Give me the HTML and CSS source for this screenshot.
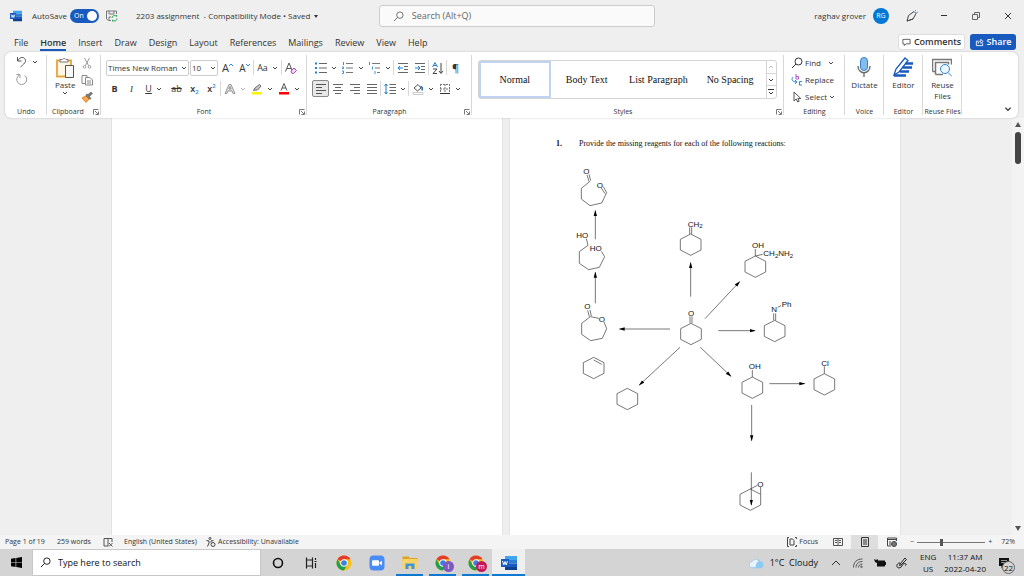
FILE: index.html
```html
<!DOCTYPE html>
<html lang="en">
<head>
  <meta charset="UTF-8" />
  <meta name="viewport" content="width=device-width, initial-scale=1.0" />
  <title>2203 assignment - Word</title>
  <link rel="stylesheet" href="styles.css">
</head>
<body>
  <!-- Shared icons -->
  <svg class="defs" aria-hidden="true">
    <symbol id="chev" viewBox="0 0 6 6"><path d="M1 2l2 2 2-2" fill="none" stroke="#444" /></symbol>
    <symbol id="launch" viewBox="0 0 6 6"><path d="M.5 5.500v-5h5M2 2l3 3M5.500 2.500v3h-3" fill="none" stroke="#555" stroke-width=".8" /></symbol>
    <symbol id="search" viewBox="0 0 12 12"><circle cx="7.500" cy="4.500" r="3.500" fill="none" stroke="currentColor" /><path d="M5 7L1 11" stroke="currentColor" /></symbol>
    <symbol id="word" viewBox="0 0 16 16">
      <path d="M4 1h12v4H4z" fill="#41a5ee" /><path d="M4 5h12v3.500H4z" fill="#2b7cd3" /><path d="M4 8.500h12V12H4z" fill="#185abd" /><path d="M4 12h12v3H4z" fill="#103f91" />
      <path d="M0 4h8v8H0z" fill="#185abd" /><path d="M1.500 6l1.300 4L4 6.500 5.200 10l1.300-4" fill="none" stroke="#fff" />
    </symbol>
    <symbol id="chrome" viewBox="0 0 16 16">
      <circle cx="8" cy="8" r="7.500" fill="#fbc116" />
      <path d="M8 8L1.500 4.250A7.500 7.500 0 0 1 14.500 4.250H8z" fill="#e33b2e" />
      <path d="M8 8L4.750 9.900 1.500 4.250A7.500 7.500 0 0 0 7.900 15.500L11.200 9.900z" fill="#229e4d" />
      <circle cx="8" cy="8" r="3.700" fill="#fff" /><circle cx="8" cy="8" r="2.800" fill="#3b7de9" />
    </symbol>
  </svg>

  <header class="titlebar">
    <div class="title-left">
      <svg class="app-icon" viewBox="0 0 16 16"><use href="#word" /></svg>
      <span class="autosave">AutoSave</span>
      <button class="toggle" aria-label="AutoSave on">On<span class="knob"></span></button>
      <svg class="save-icon" viewBox="0 0 12 12" fill="none" stroke="#777"><path d="M5 10.500H2.500l-2-1.500V1h10v3M3 1v3h5V1M3 10V7h2" /><path d="M6 8a2.500 2.500 0 0 1 4.500-1.500V5M11 8.500a2.500 2.500 0 0 1-4.500 1.500v1.500" stroke="#2fa35a" /></svg>
      <button class="doc-name">2203 assignment&nbsp; - Compatibility Mode • Saved <span class="caret"></span></button>
    </div>
    <div class="search-box">
      <svg viewBox="0 0 12 12"><use href="#search" /></svg>
      <input type="text" placeholder="Search (Alt+Q)" aria-label="Search">
    </div>
    <div class="title-right">
      <span>raghav grover</span>
      <span class="avatar">RG</span>
      <button class="win-btn pen" aria-label="Draw"><svg viewBox="0 0 12 12" fill="none" stroke="#444"><path d="M1 11l1.500-5.500L8 1.500l2 2-3 5.500zM1 11l6-2" /><path d="M9 1l1-1M10.500 2.500L12 2" stroke="#3b9be0" /></svg></button>
      <button class="win-btn" aria-label="Minimize"><svg viewBox="0 0 12 12" stroke="#333"><path d="M3 5.500h6" /></svg></button>
      <button class="win-btn" aria-label="Restore"><svg viewBox="0 0 12 12" fill="none" stroke="#666"><path d="M2.500 4.500h5v5h-5zM4.500 4V2.500h5v5H8" /></svg></button>
      <button class="win-btn" aria-label="Close"><svg viewBox="0 0 12 12" stroke="#333"><path d="M3 3l6 6M9 3l-6 6" /></svg></button>
    </div>
  </header>

  <nav class="tabs">
    <a href="#">File</a>
    <a href="#" class="active">Home</a>
    <a href="#">Insert</a>
    <a href="#">Draw</a>
    <a href="#">Design</a>
    <a href="#">Layout</a>
    <a href="#">References</a>
    <a href="#">Mailings</a>
    <a href="#">Review</a>
    <a href="#">View</a>
    <a href="#">Help</a>
    <button class="comments-btn"><svg viewBox="0 0 10 10" fill="none" stroke="#555"><path d="M1 1.500h8v5H4.500l-2 2v-2H1z" /></svg>Comments</button>
    <button class="share-btn"><svg viewBox="0 0 10 10" fill="none" stroke="#fff"><path d="M4 3.500H1.500v5h7V6M3.500 6.500c0-2 1-3 3-3V1.500L9 4 6.500 6V4.500" /></svg>Share</button>
  </nav>

  <div class="ribbon">
    <!-- Undo -->
    <section class="group undo">
      <div class="body">
        <div class="undo-row">
          <button aria-label="Undo"><svg class="i12" viewBox="0 0 12 12" fill="none" stroke="#555"><path d="M1.500 1v4h4M1.500 5c2-3.500 5-4.500 7-2.500s1.500 4-4 8.500" /></svg></button>
          <svg class="chev"><use href="#chev" /></svg>
        </div>
        <button aria-label="Redo"><svg class="i12" viewBox="0 0 12 12" fill="none" stroke="#999"><path d="M.5 1.500H4V5M3.500 2a5 5 0 1 0 5 .3" /></svg></button>
      </div>
      <h2>Undo</h2>
    </section>

    <!-- Clipboard -->
    <section class="group clipboard">
      <div class="body">
        <button class="big">
          <svg class="paste-icon" viewBox="0 0 20 22"><path d="M2 3.500h14v16H2z" fill="#fff6e6" stroke="#e8a33d" stroke-width="1.800" /><path d="M5 5V2.500h2.500a2 2 0 0 1 3.500 0h2V5z" fill="#fff" stroke="#777" /><path d="M10.500 8.500h8v12h-8z" fill="#f7f7f7" stroke="#555" /></svg>
          Paste
          <svg class="chev"><use href="#chev" /></svg>
        </button>
        <div class="clip-side">
          <button aria-label="Cut"><svg class="i12" viewBox="0 0 12 12" fill="none" stroke="#999"><path d="M3.500 1l4 7.500M8.500 1l-4 7.500" /><circle cx="3.500" cy="9.800" r="1.300" /><circle cx="8.500" cy="9.800" r="1.300" /></svg></button>
          <button aria-label="Copy"><svg class="i12" viewBox="0 0 12 12" fill="#fff" stroke="#888"><path d="M4 9.500H1v-8h5v2M4.500 3.500H9l2.500 2.500v5h-7zM6 7h4M6 9h4" /></svg></button>
          <button aria-label="Format Painter"><svg class="i12" viewBox="0 0 12 12"><path d="M1 7l4-2 3 3-3 3.500z" fill="#f3b04a" stroke="#d9822b" /><path d="M5 4.500l4 4 1-1-1.500-2 3-3-1.500-1.500-3 2.500-1.500-.5z" fill="#777" stroke="#555" stroke-width=".5" /></svg></button>
        </div>
      </div>
      <h2>Clipboard</h2>
      <button class="launcher" aria-label="Clipboard options"><svg><use href="#launch" /></svg></button>
    </section>

    <!-- Font -->
    <section class="group font">
      <div class="body">
        <div class="row">
          <span class="combo name"><select aria-label="Font"><option>Times New Roman</option></select><svg class="chev"><use href="#chev" /></svg></span>
          <span class="combo size"><select aria-label="Font size"><option>10</option></select><svg class="chev"><use href="#chev" /></svg></span>
          <button class="tool letter">A<svg class="mark" viewBox="0 0 4 4"><path d="M0 3l2-2 2 2" fill="none" stroke="#2b88d8" /></svg></button>
          <button class="tool letter small">A<svg class="mark" viewBox="0 0 4 4"><path d="M0 1l2 2 2-2" fill="none" stroke="#2b88d8" /></svg></button>
          <i class="sep"></i>
          <button class="tool drop">Aa<svg class="chev"><use href="#chev" /></svg></button>
          <i class="sep"></i>
          <button class="tool" aria-label="Clear formatting"><svg class="i12" viewBox="0 0 12 12" fill="none" stroke="#555"><path d="M.5 9.500L4 1l3 7M2 6.500h4" /><path d="M6 9l3-3 2.500 2.500-3 3H7z" stroke="#a846b8" fill="#f0d8f4" /></svg></button>
        </div>
        <div class="row">
          <button class="tool bold">B</button>
          <button class="tool italic">I</button>
          <button class="tool drop underline"><u>U</u><svg class="chev"><use href="#chev" /></svg></button>
          <button class="tool strike"><s>ab</s></button>
          <button class="tool script">x<sub>2</sub></button>
          <button class="tool script">x<sup>2</sup></button>
          <i class="sep"></i>
          <button class="tool drop faded" aria-label="Text effects"><svg class="i12" viewBox="0 0 12 12"><path d="M1 10.500L5 1.500h2l4 9H9L8 8H4l-1 2.500zM5 6h2L6 3.500z" fill="#ddd" stroke="#999" /></svg><svg class="chev"><use href="#chev" /></svg></button>
          <button class="tool drop" aria-label="Highlight"><svg class="i12" viewBox="0 0 12 12"><path d="M2.500 7.500L4 5l4.500-3.500L10 3 6.500 7H4z" fill="#ccc" stroke="#666" /><path d="M1 9h10v2.500H1z" fill="#fff200" /></svg><svg class="chev"><use href="#chev" /></svg></button>
          <button class="tool drop" aria-label="Font color"><svg class="i12" viewBox="0 0 12 12"><path d="M3 7.500L6 .5l3 7M4 5h4" fill="none" stroke="#555" /><path d="M1 9h10v2.500H1z" fill="#f00" /></svg><svg class="chev"><use href="#chev" /></svg></button>
        </div>
      </div>
      <h2>Font</h2>
      <button class="launcher" aria-label="Font options"><svg><use href="#launch" /></svg></button>
    </section>

    <!-- Paragraph -->
    <section class="group paragraph">
      <div class="body">
        <div class="row">
          <button class="tool drop wide" aria-label="Bullets"><svg class="i12" viewBox="0 0 12 12"><path d="M4 1.500h8M4 6h8M4 10.500h8" stroke="#666" /><path d="M0 .5h2v2H0zM0 5h2v2H0zM0 9.500h2v2H0z" fill="#1e7fd0" /></svg><svg class="chev"><use href="#chev" /></svg></button>
          <button class="tool drop wide" aria-label="Numbering"><svg class="i12" viewBox="0 0 12 12" fill="none"><path d="M4 1.500h7M4 6h7M4 10.500h7" stroke="#777" /><path d="M1.500 0v3M0 5h1.500v1.500H0M0 9h1.500v2.500H0" stroke="#3b93d8" /></svg><svg class="chev"><use href="#chev" /></svg></button>
          <button class="tool drop wide" aria-label="Multilevel list"><svg class="i12" viewBox="0 0 12 12" fill="none"><path d="M3 1.500h8M6 6h5M8 10.500h3" stroke="#777" /><path d="M.5 0v3M3.500 4.500v3M6 9v3" stroke="#3b93d8" /></svg><svg class="chev"><use href="#chev" /></svg></button>
          <i class="sep"></i>
          <button class="tool" aria-label="Decrease indent"><svg class="i12" viewBox="0 0 12 12" fill="none" stroke="#666"><path d="M1 1.500h10M7 4.500h4M7 7.500h4M1 10.500h10" /><path d="M6 6H1.500M3 4L1 6l2 2" stroke="#1e7fd0" /></svg></button>
          <button class="tool" aria-label="Increase indent"><svg class="i12" viewBox="0 0 12 12" fill="none" stroke="#666"><path d="M1 1.500h10M7 4.500h4M7 7.500h4M1 10.500h10" /><path d="M1 6h4.500M4 4l2 2-2 2" stroke="#1e7fd0" /></svg></button>
          <i class="sep"></i>
          <button class="tool" aria-label="Sort"><svg class="i12" viewBox="0 0 12 12" fill="none"><path d="M.5 5L3 .5 5.500 5M1.500 3.500h3" stroke="#1e7fd0" /><path d="M1 7h4l-4 4.500h4M9 1v10M7 9l2 2.500L11 9" stroke="#444" /></svg></button>
          <i class="sep"></i>
          <button class="tool pilcrow">¶</button>
        </div>
        <div class="row">
          <button class="tool pressed" aria-label="Align left"><svg class="i12" viewBox="0 0 12 12" stroke="#555"><path d="M1 1.500h10M1 4.500h6M1 7.500h10M1 10.500h6" /></svg></button>
          <button class="tool" aria-label="Center"><svg class="i12" viewBox="0 0 12 12" stroke="#666"><path d="M1 1.500h10M3 4.500h6M1 7.500h10M3 10.500h6" /></svg></button>
          <button class="tool" aria-label="Align right"><svg class="i12" viewBox="0 0 12 12" stroke="#666"><path d="M1 1.500h10M5 4.500h6M1 7.500h10M5 10.500h6" /></svg></button>
          <button class="tool" aria-label="Justify"><svg class="i12" viewBox="0 0 12 12" stroke="#666"><path d="M1 1.500h10M1 4.500h10M1 7.500h10M1 10.500h10" /></svg></button>
          <i class="sep"></i>
          <button class="tool drop wide" aria-label="Line spacing"><svg class="i12" viewBox="0 0 12 12" fill="none" stroke="#666"><path d="M5.500 1.500H12M5.500 4.500H12M5.500 7.500H12M5.500 10.500H12" /><path d="M2 1v10M.5 3L2 1l1.500 2M.5 9L2 11l1.500-2" stroke="#1e7fd0" /></svg><svg class="chev"><use href="#chev" /></svg></button>
          <i class="sep"></i>
          <button class="tool drop wide" aria-label="Shading"><svg class="i12" viewBox="0 0 12 12" fill="none"><path d="M2 5l4-3.500L9 5 5.500 8z" stroke="#555" /><path d="M8.500 3.500c2 0 2 1.500 1.500 4" stroke="#1e6fc0" stroke-width="1.500" /><path d="M1 9.500h10v2H1z" stroke="#ccc" /></svg><svg class="chev"><use href="#chev" /></svg></button>
          <button class="tool drop wide" aria-label="Borders"><svg class="i12" viewBox="0 0 12 12" fill="none" stroke="#777"><path d="M1.500 1v9M6 1v9M10.500 1v9M1 1.500h10M1 6h10" stroke-dasharray="2 1" /><path d="M1 10.500h10" stroke="#333" /></svg><svg class="chev"><use href="#chev" /></svg></button>
        </div>
      </div>
      <h2>Paragraph</h2>
      <button class="launcher" aria-label="Paragraph options"><svg><use href="#launch" /></svg></button>
    </section>

    <!-- Styles -->
    <section class="group styles">
      <div class="body">
        <div class="gallery">
          <button class="style selected">Normal</button>
          <button class="style">Body Text</button>
          <button class="style">List Paragraph</button>
          <button class="style">No Spacing</button>
          <div class="scroll">
            <button aria-label="Previous" disabled><svg viewBox="0 0 6 6"><path d="M1 4l2-2 2 2" fill="none" stroke="#bbb" /></svg></button>
            <button aria-label="Next"><svg viewBox="0 0 6 6"><use href="#chev" /></svg></button>
            <button aria-label="More styles"><svg viewBox="0 0 6 6"><path d="M0 .5h6M1 3l2 2 2-2" fill="none" stroke="#333" /></svg></button>
          </div>
        </div>
      </div>
      <h2>Styles</h2>
      <button class="launcher" aria-label="Styles options"><svg><use href="#launch" /></svg></button>
    </section>

    <!-- Editing -->
    <section class="group editing">
      <div class="body">
        <button><svg class="i12" viewBox="0 0 12 12"><use href="#search" /></svg><span class="find">Find</span><svg class="chev"><use href="#chev" /></svg></button>
        <button><svg class="i12" viewBox="0 0 12 12" fill="none"><path d="M5 0v5M5 2.500h2.500V5H5" stroke="#b455c4" /><path d="M11 7.500H8.500V11H11M2 3C0 5 1 8 5.500 8M4 6l2 2-2 2" stroke="#2b88d8" /></svg>Replace</button>
        <button><svg class="i12" viewBox="0 0 12 12" fill="none" stroke="#555"><path d="M3 1v9l2.200-2 1.500 3 1.500-.8L6.800 7.500h3z" /></svg>Select<svg class="chev"><use href="#chev" /></svg></button>
      </div>
      <h2>Editing</h2>
    </section>

    <section class="group voice">
      <div class="body">
        <button class="big"><svg class="i20" viewBox="0 0 20 20"><rect x="6.500" y=".5" width="7" height="13" rx="3.500" fill="#83bdf0" stroke="#3a7fc1" /><path d="M4 9c0 9 12 9 12 0M10 16v4" fill="none" stroke="#666" stroke-width="1.300" /></svg>Dictate</button>
      </div>
      <h2>Voice</h2>
    </section>

    <section class="group editor">
      <div class="body">
        <button class="big"><svg class="i20" viewBox="0 0 20 20"><path d="M1 18L3 12 12 1l3 2.500L6 15z" fill="#fff" stroke="#185abd" stroke-width="1.300" /><path d="M12.500 6.500H20M9.500 10.500H19M7 14.500h9M1 18.500h12" stroke="#185abd" stroke-width="2.600" /></svg>Editor</button>
      </div>
      <h2>Editor</h2>
    </section>

    <section class="group reuse">
      <div class="body">
        <button class="big"><svg class="i20" viewBox="0 0 20 20" fill="none" stroke="#777"><path d="M.5 14.500V2.500h19v5M.5 14.500H3M3.500 17.500v-12h13v2M3.500 17.500H11" stroke-width="1.500" /><circle cx="13" cy="12" r="4.500" stroke="#2b88d8" fill="#eef6fd" /><path d="M16 15.500l4 4" stroke="#2b88d8" /></svg>Reuse<br>Files</button>
      </div>
      <h2>Reuse Files</h2>
    </section>

    <button class="collapse" aria-label="Collapse ribbon"><svg class="chev" viewBox="0 0 6 6"><use href="#chev" /></svg></button>
  </div>

  <main class="workspace">
    <div class="pages">
      <article class="page"></article>
      <article class="page">
        <p class="question"><span>1.</span>Provide the missing reagents for each of the following reactions:</p>
        <svg class="scheme" viewBox="-90 90 1170 1125">
          <defs>
            <path id="hex" d="M0-32L31-16V16L0 32-31 16V-16z" />
            <marker id="head" viewBox="0 0 18 12" refX="16" refY="6" markerWidth="18" markerHeight="12" markerUnits="userSpaceOnUse" orient="auto"><path d="M0 1l18 5-18 5z" class="solid" /></marker>
          </defs>

          <!-- Left column -->
          <path d="M141 135l6 19M147 133l5 19M150 154L124 175V207L150 227 185 219 200 188 190 170M195 191L184 174" />
          <text x="130" y="133">O</text>
          <text x="170" y="173">O</text>
          <path d="M139 326L144 346 118 365V400L146 419 178 412 194 380 184 364" />
          <text x="109" y="325">HO</text>
          <text x="149" y="364">HO</text>
          <path d="M143 541l5 19M150 540l4 18M177 565L151 560 125 580V613L152 632 187 625 200 596 192 576" />
          <text x="133" y="538">O</text>
          <text x="176" y="577">O</text>
          <use href="#hex" x="161" y="714" />
          <path d="M161 690l24 13" />
          <use href="#hex" x="262" y="807" />

          <!-- Starting ketone -->
          <use href="#hex" x="453" y="612" />
          <path d="M450 559v20M456 559v20" />
          <text x="444" y="557">O</text>

          <!-- Products -->
          <use href="#hex" x="452" y="344" />
          <path d="M449 292v20M455 292v20" />
          <text x="443" y="290">CH<tspan class="sub" dy="5">2</tspan></text>

          <use href="#hex" x="646" y="410" />
          <path d="M646 357v21l22-5" />
          <text x="636" y="355">OH</text>
          <text x="670" y="378">CH<tspan class="sub" dy="5">2</tspan><tspan dy="-5">NH</tspan><tspan class="sub" dy="5">2</tspan></text>

          <use href="#hex" x="704" y="603" />
          <path d="M701 550v21M707 550v21M713 532l10-5" />
          <text x="694" y="547">N</text>
          <text x="725" y="532">Ph</text>

          <use href="#hex" x="637" y="773" />
          <path d="M637 720v21" />
          <text x="626" y="718">OH</text>

          <use href="#hex" x="853" y="763" />
          <path d="M853 709v22" />
          <text x="844" y="707">Cl</text>

          <use href="#hex" x="631" y="1109" />
          <path d="M631 1077l21-11M662 1093v-22" />
          <text x="652" y="1071">O</text>

          <!-- Arrows -->
          <g class="arrows">
            <path d="M166 328V242" />
            <path d="M166 520V427" />
            <path d="M452 500V398" />
            <path d="M495 566L599 455" />
            <path d="M390 597H238" />
            <path d="M535 602H645" />
            <path d="M420 652L298 765" />
            <path d="M481 652L573 739" />
            <path d="M688 761H794" />
            <path d="M635 825V932" />
            <path d="M634 1027V1125" />
          </g>
        </svg>
      </article>
    </div>
    <div class="scrollbar">
      <i class="up"></i>
      <i class="thumb"></i>
      <i class="down"></i>
    </div>
  </main>

  <div class="statusbar">
    <span class="s-page">Page 1 of 19</span>
    <span class="s-words">259 words</span>
    <svg class="s-proof" viewBox="0 0 10 10" fill="none" stroke="#555"><path d="M5 1.500V9M5 1.500H1V9h4M5 1.500h4V5M6 6l3.500 3.500M9.500 6L6 9.500" /></svg>
    <span class="s-lang">English (United States)</span>
    <span class="s-acc"><svg viewBox="0 0 10 10" fill="none" stroke="#444"><circle cx="4" cy="1.500" r="1" /><path d="M.5 3.500L3 4v2L1.500 9.500M7.500 3.500L5 4v1.500" /><circle cx="7" cy="7.500" r="2" /></svg>Accessibility: Unavailable</span>
    <button class="s-focus"><svg viewBox="0 0 10 10" fill="none" stroke="#444"><path d="M2 .5H.5V9.500H2M8 .5h1.500V2M8 9.500h1.500V8M3 2h2.500L7 3.500V8H3z" /></svg>Focus</button>
    <button class="view" aria-label="Read mode"><svg viewBox="0 0 10 10" fill="none" stroke="#555"><path d="M.5 1.500h9v7h-9zM5 1v8M2 3.500h2M2 5.500h2M6 3.500h2M6 5.500h2" /></svg></button>
    <button class="view on" aria-label="Print layout"><svg viewBox="0 0 10 10" fill="none" stroke="#333"><path d="M1.500.5h7v9h-7zM3 3h4M3 5h4M3 7h4" /></svg></button>
    <button class="view" aria-label="Web layout"><svg viewBox="0 0 10 10" fill="none" stroke="#444"><path d="M9.500 4V1H.5v8H4M1 2.500h8M2 5h2M2 7h2" /><circle cx="7" cy="7" r="2.500" fill="#777" /></svg></button>
    <div class="zoom">
      <span>−</span>
      <input type="range" min="10" max="190" value="72" aria-label="Zoom">
      <span>+</span>
    </div>
    <span class="s-pct">72%</span>
  </div>

  <footer class="taskbar">
    <button class="start" aria-label="Start"><svg viewBox="0 0 12 12"><path d="M0 2l5-.8v4.500H0zM5.700 1L12 0v5.700H5.700zM0 6.400h5V11l-5-.8zM5.700 6.400H12V12l-6.300-1z" /></svg></button>
    <div class="task-search">
      <svg viewBox="0 0 12 12"><use href="#search" /></svg>
      <input type="text" placeholder="Type here to search" aria-label="Type here to search">
    </div>
    <div class="apps">
      <button aria-label="Cortana"><svg viewBox="0 0 16 16"><circle cx="8" cy="8" r="4.500" fill="none" stroke="#111" stroke-width="1.600" /></svg></button>
      <button aria-label="Task view"><svg viewBox="0 0 16 16" fill="none" stroke="#222"><path d="M3.500 2.500v11M9.500 2.500v11M3.500 5h6M3.500 11h6M12.500 3v2M12.500 8v5M11.500 6.500h2" stroke-width="1.200" /></svg></button>
      <button aria-label="Chrome"><svg viewBox="0 0 16 16"><use href="#chrome" /></svg></button>
      <button aria-label="Zoom"><svg viewBox="0 0 16 16"><rect x=".5" y=".5" width="15" height="15" rx="4" fill="#4a8cf7" /><rect x="3" y="5.300" width="7" height="5.500" rx="1" fill="#fff" /><path d="M10.500 7.500L13 5.800v4.500l-2.500-1.500z" fill="#fff" /></svg></button>
      <button class="open" aria-label="File Explorer"><svg viewBox="0 0 16 16"><path d="M.5 1.500h6l1 1.500h8v3H.5z" fill="#d9a321" /><path d="M.5 4h15v10H.5z" fill="#fbd264" /><path d="M3.500 14V8.500h9V14h-3v-3h-3v3z" fill="#3d95dd" /></svg></button>
      <button class="open" aria-label="Chrome, profile i"><svg viewBox="0 0 16 16"><use href="#chrome" /></svg><b class="badge violet">i</b></button>
      <button class="open" aria-label="Chrome, profile m"><svg viewBox="0 0 16 16"><use href="#chrome" /></svg><b class="badge pink">m</b></button>
      <button class="open current" aria-label="Word"><svg viewBox="0 0 16 16"><use href="#word" /></svg></button>
    </div>
    <div class="tray">
      <svg class="weather" viewBox="0 0 16 12"><path d="M4 11.500a3.500 3.500 0 0 1-.5-7A5 5 0 0 1 12 4a3.800 3.800 0 0 1 .5 7.500z" fill="#8fc8f2" /><path d="M3.500 10.500a2.500 2.500 0 0 1 0-5.500C5 2 9 1.500 10.500 4.500c-2 .5-3 2-3.500 6z" fill="#e6f4fd" /></svg>
      <span class="temp">1°C&nbsp; Cloudy</span>
      <svg class="tray-icon" viewBox="0 0 12 12" fill="none" stroke="#333"><path d="M2 8l4-4 4 4" /></svg>
      <svg class="tray-icon" viewBox="0 0 12 12" fill="none" stroke="#555"><path d="M1.500 10.500C1.500 5 5 2 10.500 2M4 10.500c0-3.500 2.500-6 6.500-6M6.500 10.500c0-2 1.500-3.500 4-3.500" /><circle cx="9.500" cy="9.800" r=".8" /></svg>
      <svg class="tray-icon" viewBox="0 0 12 12"><path d="M0 2l2 1 1.500-1L4 3.500h7V5h1v3h-1v1.500H3V6L1 5z" fill="#111" /></svg>
      <svg class="tray-icon" viewBox="0 0 12 12" fill="none" stroke="#222"><path d="M4 7l5-6 1.500 1.500L5 8 3.500 8.500zM4 6c-4 0-4 5-1 5s3-4 5-4.500 3 1.500 1 2" /></svg>
      <span class="stack lang">ENG<br>US</span>
      <span class="stack time">11:37 AM<br>2022-04-20</span>
      <button class="notify" aria-label="Notifications"><svg viewBox="0 0 12 12"><path d="M1 1h10v8H6l-2.500 2.500V9H1z" fill="#111" /><path d="M3 3.500h6M3 5.500h6" stroke="#ccc" stroke-width=".7" /></svg><b>22</b></button>
    </div>
  </footer>
</body>
</html>
```
FILE: styles.css
```css
* {
  box-sizing: border-box;
  margin: 0;
  padding: 0;
}

body {
  display: flex;
  flex-direction: column;
  min-height: 100vh;
  background-color: #efefef;
  color: #333;
  font-family: "Open Sans", "Noto Sans", sans-serif;
  font-size: 8px;
  line-height: 12px;
}

button,
input,
select {
  font: inherit;
  color: inherit;
  background: none;
  border: none;
}

svg {
  display: block;
  flex: none;
}

.defs {
  position: absolute;
  width: 0;
  height: 0;
}

.i12 {
  width: 12px;
  height: 12px;
}

.i20 {
  width: 20px;
  height: 20px;
}

.chev {
  width: 6px;
  height: 6px;
}

/* Title bar */
.titlebar {
  display: flex;
  align-items: center;
  height: 32px;
}

.title-left {
  display: flex;
  align-items: center;
  flex: 1;
  padding-left: 10px;
}

.app-icon {
  width: 12px;
  height: 12px;
  margin-right: 10px;
}

.autosave {
  width: 38px;
}

.toggle {
  display: flex;
  align-items: center;
  justify-content: space-between;
  width: 29px;
  height: 14px;
  padding: 0 2px 0 4px;
  border-radius: 7px;
  background: #185abd;
  color: #fff;
  font-size: 7px;
}

.knob {
  width: 10px;
  height: 10px;
  border-radius: 50%;
  background: #fff;
}

.save-icon {
  width: 12px;
  height: 12px;
  margin: 0 18px 0 7px;
}

.doc-name {
  display: flex;
  align-items: center;
  gap: 4px;
  white-space: nowrap;
}

.caret {
  border: 2px solid transparent;
  border-top: 3px solid #333;
  border-bottom: 0;
}

.search-box {
  display: flex;
  align-items: center;
  gap: 8px;
  width: 27%;
  height: 22px;
  padding-left: 13px;
  border: 1px solid #ccc;
  border-radius: 3px;
  background: #fafafa;
  color: #666;
  font-size: 9px;
}

.search-box svg {
  width: 11px;
  height: 11px;
}

.search-box input,
.task-search input {
  flex: 1;
  min-width: 0;
  outline: none;
}

::placeholder {
  color: inherit;
  opacity: 1;
}

.title-right {
  display: flex;
  align-items: center;
  justify-content: flex-end;
  flex: 1;
}

.avatar {
  width: 16px;
  height: 16px;
  margin: 0 7px;
  border-radius: 50%;
  background: #0078d4;
  color: #fff;
  font-size: 7px;
  line-height: 16px;
  text-align: center;
}

.win-btn {
  display: flex;
  justify-content: center;
  width: 32px;
}

.win-btn svg {
  width: 12px;
  height: 12px;
}

/* Tabs */
.tabs {
  display: flex;
  align-items: center;
  gap: 12px;
  height: 20px;
  padding: 0 8px 0 14px;
  font-size: 9px;
}

.tabs a {
  height: 18px;
  line-height: 20px;
  color: #333;
  text-decoration: none;
}

.tabs .active {
  border-bottom: 2px solid #185abd;
  font-weight: 600;
}

.tabs button {
  display: flex;
  align-items: center;
  justify-content: center;
  gap: 3px;
  height: 16px;
  border-radius: 3px;
  font-weight: 600;
}

.tabs button svg {
  width: 9px;
  height: 9px;
}

.comments-btn {
  width: 67px;
  margin-left: auto;
  margin-right: -7px;
  border: 1px solid #ddd;
  background: #fff;
}

.tabs .share-btn {
  width: 46px;
  background: #185abd;
  color: #fff;
}

/* Ribbon */
.ribbon {
  display: flex;
  height: 66px;
  margin: 0 6px 0 5px;
  border-radius: 6px;
  background: #fff;
  box-shadow: 0 0 2px rgba(0, 0, 0, 0.25);
  z-index: 1;
}

.group {
  position: relative;
  display: flex;
  flex-direction: column;
  flex: none;
}

.group::after {
  content: "";
  position: absolute;
  top: 3px;
  right: 0;
  bottom: 3px;
  width: 1px;
  background: #d8d8d8;
}

.group h2 {
  height: 12px;
  font-size: 7px;
  font-weight: 400;
  line-height: 12px;
  text-align: center;
  white-space: nowrap;
}

.group .body {
  flex: 1;
}

.launcher {
  position: absolute;
  right: 2px;
  bottom: 3px;
}

.launcher svg {
  width: 6px;
  height: 6px;
}

.big {
  display: flex;
  flex-direction: column;
  align-items: center;
  line-height: 11px;
}

.undo {
  width: 42px;
}

.undo .body {
  padding: 4px 0 0 11px;
}

.undo-row {
  display: flex;
  align-items: center;
  gap: 4px;
  margin-bottom: 5px;
}

.clipboard {
  width: 54px;
}

.clipboard h2 {
  padding-right: 12px;
}

.clipboard .body {
  display: flex;
  gap: 6px;
  padding: 5px 0 0 8px;
}

.paste-icon {
  width: 20px;
  height: 22px;
}

.clip-side {
  display: flex;
  flex-direction: column;
  gap: 5px;
}

.font {
  width: 206px;
}

.font .body,
.paragraph .body {
  padding: 5px 0 0 5px;
}

.row {
  display: flex;
  align-items: center;
  height: 21px;
}

.combo {
  position: relative;
  height: 16px;
  margin-right: 1px;
  border: 1px solid #ccc;
  border-radius: 2px;
}

.combo select {
  width: 100%;
  height: 14px;
  padding-left: 1px;
  appearance: none;
}

.combo .chev {
  position: absolute;
  top: 4px;
  right: 1px;
}

.name {
  width: 83px;
}

.size {
  width: 28px;
}

.tool {
  position: relative;
  display: flex;
  align-items: center;
  justify-content: center;
  width: 17px;
  height: 17px;
  font-size: 9px;
}

.drop {
  width: 27px;
  gap: 4px;
}

.letter {
  font-size: 11px;
}

.letter.small {
  font-size: 10px;
}

.mark {
  width: 4px;
  height: 4px;
  margin-bottom: 6px;
}

.bold {
  font-weight: 700;
}

.italic {
  font-family: "Liberation Serif", serif;
  font-style: italic;
}

.strike {
  width: 19px;
}

.script {
  font-weight: 600;
}

.script sub,
.script sup {
  color: #2b88d8;
  font-size: 6px;
}

.script sub {
  margin-top: 6px;
}

.script sup {
  margin-bottom: 6px;
}

.faded .chev {
  opacity: 0.4;
}

.sep {
  width: 1px;
  height: 15px;
  background: #d8d8d8;
}

.paragraph {
  width: 165px;
}

.pressed {
  border: 1px solid #888;
  border-radius: 2px;
  background: #e8e8e8;
}

.pilcrow {
  font-size: 11px;
}

.styles {
  flex: 1;
}

.styles h2 {
  padding-right: 10px;
}

.styles .body {
  padding: 8px 7px 0 6px;
}

.gallery {
  display: flex;
  height: 39px;
  border: 1px solid #d4d4d4;
  border-radius: 3px;
}

.style {
  flex: 1 1 0;
  min-width: 0;
  color: #111;
  font-family: "Liberation Serif", serif;
  font-size: 10px;
  text-align: center;
  white-space: nowrap;
}

.style.selected {
  box-shadow: inset 0 0 0 2px #c0d3f1;
}

.scroll {
  display: flex;
  flex-direction: column;
  width: 10px;
  border-left: 1px solid #d4d4d4;
}

.scroll button {
  flex: 1;
  padding-left: 1px;
}

.scroll button + button {
  border-top: 1px solid #d4d4d4;
}

.scroll svg {
  width: 6px;
  height: 6px;
}

.editing {
  width: 61px;
}

.editing .body {
  padding: 2px 0 0 7px;
}

.editing .body button {
  display: flex;
  align-items: center;
  gap: 2px;
  height: 17px;
}

.find {
  width: 21px;
  text-align: left;
}

.voice,
.editor,
.reuse {
  width: 39px;
}

.voice .body,
.editor .body,
.reuse .body {
  display: flex;
  justify-content: center;
  align-items: flex-start;
  padding-top: 5px;
}

.voice .big svg,
.editor .big svg,
.reuse .big svg {
  margin-bottom: 2px;
}

.collapse {
  align-self: flex-end;
  width: 56px;
  padding: 0 6px 5px 0;
}

.collapse .chev {
  width: 8px;
  height: 8px;
  margin-left: auto;
}

/* Document area */
.workspace {
  display: flex;
  flex: 1;
}

.pages {
  display: flex;
  justify-content: center;
  gap: 8px;
  flex: 1;
}

.page {
  width: 39%;
  max-width: 390px;
  background: #fff;
  box-shadow: 0 0 1px #aaa;
}

.question {
  padding: 20px 0 10px 46px;
  color: #111;
  font-family: "Liberation Serif", serif;
  font-size: 8px;
}

.question span {
  display: inline-block;
  width: 23px;
  font-weight: 700;
}

.scheme {
  width: 100%;
  fill: none;
  stroke: #333;
  stroke-width: 2;
}

.scheme text {
  fill: #111;
  stroke: none;
  font-family: "Liberation Sans", sans-serif;
  font-size: 24px;
}

.scheme .sub {
  font-size: 18px;
}

.scheme .solid {
  fill: #000;
  stroke: none;
}

.arrows path {
  marker-end: url(#head);
}

.scrollbar {
  display: flex;
  flex-direction: column;
  align-items: center;
  width: 12px;
  padding: 4px 0;
  background: #f3f3f3;
}

.up,
.down {
  border: 3px solid transparent;
}

.up {
  border-top: 0;
  border-bottom: 5px solid #555;
}

.down {
  margin-top: auto;
  border-bottom: 0;
  border-top: 5px solid #555;
}

.thumb {
  width: 6px;
  height: 32px;
  margin-top: 5px;
  border-radius: 3px;
  background: #444;
}

/* Status bar */
.statusbar {
  display: flex;
  align-items: center;
  height: 14px;
  padding: 0 9px 0 5px;
  background: #f4f4f4;
  font-size: 7px;
  white-space: nowrap;
  z-index: 1;
}

.statusbar svg {
  width: 10px;
  height: 10px;
}

.s-page {
  width: 52px;
}

.s-words {
  width: 46px;
}

.s-lang {
  width: 82px;
  margin-left: 11px;
}

.s-acc,
.s-focus {
  display: flex;
  align-items: center;
  gap: 2px;
}

.s-focus {
  margin-left: auto;
  margin-right: 6px;
}

.view {
  display: flex;
  align-items: center;
  justify-content: center;
  width: 27px;
  height: 14px;
}

.view.on {
  background: #dedede;
}

.zoom {
  display: flex;
  align-items: center;
  gap: 3px;
  margin: 0 9px 0 5px;
}

.zoom input {
  width: 68px;
  height: 8px;
  appearance: none;
  background: linear-gradient(#777, #777) center / 100% 1px no-repeat;
}

.zoom input::-webkit-slider-thumb {
  appearance: none;
  width: 3px;
  height: 7px;
  background: #555;
}

/* Taskbar */
.taskbar {
  display: flex;
  height: 27px;
  background: #d4d4d4;
  color: #111;
  font-size: 8px;
}

.start {
  display: flex;
  align-items: center;
  justify-content: center;
  width: 32px;
}

.start svg {
  width: 11px;
  height: 11px;
}

.task-search {
  display: flex;
  align-items: center;
  gap: 7px;
  width: 229px;
  padding-left: 7px;
  border: 1px solid #c8c8c8;
  background: #fff;
  font-size: 9px;
}

.task-search svg {
  width: 11px;
  height: 11px;
}

.apps {
  display: flex;
}

.apps button {
  position: relative;
  display: flex;
  align-items: center;
  justify-content: center;
  width: 33px;
}

.apps svg {
  width: 16px;
  height: 16px;
}

.open::after {
  content: "";
  position: absolute;
  left: 3px;
  right: 3px;
  bottom: 0;
  height: 2px;
  background: #0f78d0;
}

.current {
  background: #efefef;
}

.current::after {
  left: 0;
  right: 0;
}

.badge {
  position: absolute;
  right: 5px;
  bottom: 4px;
  width: 11px;
  height: 11px;
  border-radius: 50%;
  color: #fff;
  font-size: 7px;
  font-weight: 400;
  line-height: 11px;
}

.violet {
  background: #7e57c2;
}

.pink {
  background: #c2185b;
}

.tray {
  display: flex;
  align-items: center;
  margin-left: auto;
  padding-right: 14px;
}

.weather {
  width: 15px;
  height: 12px;
  margin-right: 6px;
}

.temp {
  margin-right: 12px;
  font-size: 9px;
  white-space: nowrap;
}

.tray-icon {
  width: 12px;
  height: 12px;
  margin-right: 10px;
}

.stack {
  text-align: center;
  white-space: nowrap;
}

.lang {
  margin-left: 2px;
  margin-right: 8px;
}

.time {
  margin-right: 12px;
}

.notify {
  position: relative;
}

.notify svg {
  width: 12px;
  height: 12px;
}

.notify b {
  position: absolute;
  left: 4px;
  top: 4px;
  width: 13px;
  height: 13px;
  border: 1px solid #666;
  border-radius: 50%;
  background: #d4d4d4;
  font-size: 8px;
  font-weight: 400;
  line-height: 11px;
}
```
